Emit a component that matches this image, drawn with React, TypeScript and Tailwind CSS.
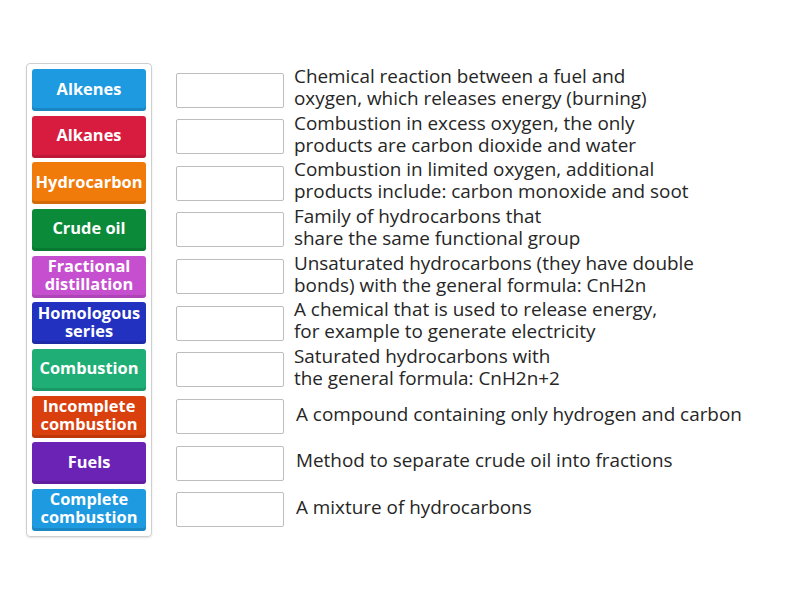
import React from "react";

type Tile = { label: string; color: string };

const tiles: Tile[] = [
  { label: "Alkenes", color: "bg-[#1d9ae0]" },
  { label: "Alkanes", color: "bg-[#d81c3f]" },
  { label: "Hydrocarbon", color: "bg-[#f07a0a]" },
  { label: "Crude oil", color: "bg-[#0b8a3a]" },
  { label: "Fractional distillation", color: "bg-[#c64fd0]" },
  { label: "Homologous series", color: "bg-[#2231c0]" },
  { label: "Combustion", color: "bg-[#1fae76]" },
  { label: "Incomplete combustion", color: "bg-[#d9400e]" },
  { label: "Fuels", color: "bg-[#6b23b6]" },
  { label: "Complete combustion", color: "bg-[#1d9ae0]" },
];

const defs: string[][] = [
  ["Chemical reaction between a fuel and", "oxygen, which releases energy (burning)"],
  ["Combustion in excess oxygen, the only", "products are carbon dioxide and water"],
  ["Combustion in limited oxygen, additional", "products include: carbon monoxide and soot"],
  ["Family of hydrocarbons that", "share the same functional group"],
  ["Unsaturated hydrocarbons (they have double", "bonds) with the general formula: CnH2n"],
  ["A chemical that is used to release energy,", "for example to generate electricity"],
  ["Saturated hydrocarbons with", "the general formula: CnH2n+2"],
  ["A compound containing only hydrogen and carbon"],
  ["Method to separate crude oil into fractions"],
  ["A mixture of hydrocarbons"],
];

const App = () => {
  return (
    <div className="w-[800px] h-[600px] bg-white font-['Open_Sans',sans-serif]">
      <div className="flex pt-[63px] pl-[26px] gap-[24px]">
        {/* tile bank */}
        <div className="w-[126px] border border-[#cfcfcf] rounded-[4px] p-[5px] flex flex-col gap-[4.67px] shadow-[0_1px_2px_rgba(0,0,0,0.12)]">
          {tiles.map((t) => (
            <div
              key={t.label}
              className={`${t.color} h-[42px] rounded-[3px] flex items-center justify-center text-center text-white font-bold text-[16.4px] leading-[18px] pb-[3px] shadow-[inset_0_-3px_0_rgba(0,0,0,0.12)]`}
            >
              {t.label}
            </div>
          ))}
        </div>

        {/* answer rows */}
        <div className="flex flex-col gap-[4.67px] pt-[6px]">
          {defs.map((lines, i) => (
            <div key={i} className="h-[42px] flex items-center gap-[10px]">
              <div className="w-[108px] h-[35px] bg-white border border-[#bdbdbd] rounded-[2px] shrink-0" />
              <p
                className={`text-[18.9px] leading-[22px] text-[#262626] whitespace-nowrap mb-[6px] ${
                  lines.length === 1 ? "pl-[2px]" : ""
                }`}
              >
                {lines[0]}
                {lines[1] && (
                  <>
                    <br />
                    {lines[1]}
                  </>
                )}
              </p>
            </div>
          ))}
        </div>
      </div>
    </div>
  );
};

export default App;
